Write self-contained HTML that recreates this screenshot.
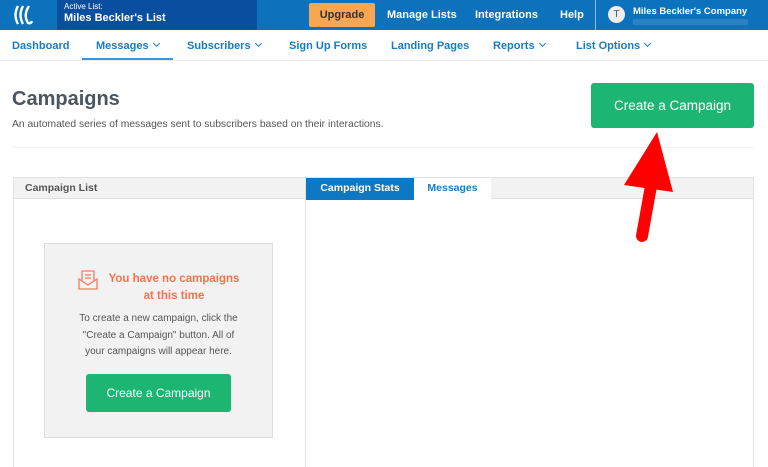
<!DOCTYPE html>
<html><head><meta charset="utf-8"><style>
*{margin:0;padding:0;box-sizing:border-box}
body{width:768px;height:467px;overflow:hidden;background:#fff;font-family:"Liberation Sans",sans-serif;position:relative}
.abs{position:absolute}
.top{left:0;top:0;width:768px;height:30px;background:#0b72bb}
.al{left:57px;top:0;width:200px;height:30px;background:#0a4f9f;color:#fff}
.nav a{position:absolute;top:40px;font-size:11px;font-weight:bold;color:#1a7bc0;white-space:nowrap}
.chev{display:inline-block;width:5px;height:5px;border-right:1.5px solid #1a7bc0;border-bottom:1.5px solid #1a7bc0;transform:rotate(45deg);margin-left:5px;position:relative;top:-3px}
.tl{color:#fff;font-size:11px;font-weight:bold;top:9px}
.btn{background:#1db572;color:#fff;border-radius:3px;text-align:center}
</style></head><body>
<div class="abs top"></div>
<svg class="abs" style="left:10px;top:3px" width="28" height="24" viewBox="0 0 28 24"><g fill="none" stroke="#fff" stroke-width="2.4"><path d="M8 3 Q3 12 8 21"/><path d="M13 3 Q8 12 13 21"/><path d="M19 3 Q13 12 18 20 Q21 21 22 18"/></g></svg>
<div class="abs al"><div style="position:absolute;left:7px;top:2px;font-size:8px">Active List:</div><div style="position:absolute;left:7px;top:12px;font-size:11px;font-weight:bold">Miles Beckler's List</div></div>
<div class="abs" style="left:309px;top:3px;width:66px;height:24px;background:#f9a653;border-radius:2px;font-size:11px;font-weight:bold;color:#333;text-align:center;line-height:24px">Upgrade</div>
<div class="abs tl" style="left:387px">Manage Lists</div>
<div class="abs tl" style="left:475px">Integrations</div>
<div class="abs tl" style="left:560px">Help</div>
<div class="abs" style="left:595px;top:0;width:1px;height:30px;background:#8fb9dd"></div>
<div class="abs" style="left:608px;top:6px;width:17px;height:17px;border-radius:50%;background:#eee;color:#555;font-size:10px;text-align:center;line-height:17px">T</div>
<div class="abs" style="left:633px;top:6px;color:#fff;font-size:9.5px;font-weight:bold">Miles Beckler's Company</div>
<div class="abs" style="left:633px;top:19px;width:115px;height:6px;background:#2a82c4"></div>
<div class="nav">
<a style="left:12px">Dashboard</a>
<a style="left:96px">Messages<span class="chev"></span></a>
<a style="left:187px">Subscribers<span class="chev"></span></a>
<a style="left:289px">Sign Up Forms</a>
<a style="left:391px">Landing Pages</a>
<a style="left:493px">Reports<span class="chev"></span></a>
<a style="left:576px">List Options<span class="chev"></span></a>
</div>
<div class="abs" style="left:82px;top:58px;width:91px;height:2px;background:#3f94d2"></div>
<div class="abs" style="left:0;top:60px;width:768px;height:1px;background:#e8ecef"></div>
<div class="abs" style="left:12px;top:88px;font-size:20px;font-weight:bold;color:#4a5560">Campaigns</div>
<div class="abs" style="left:12px;top:119px;font-size:10.3px;color:#555;white-space:nowrap">An automated series of messages sent to subscribers based on their interactions.</div>
<div class="abs btn" style="left:591px;top:83px;width:163px;height:45px;line-height:45px;font-size:13.5px">Create a Campaign</div>
<div class="abs" style="left:12px;top:147px;width:742px;height:1px;background:#eef0f2"></div>
<div class="abs" style="left:13px;top:177px;width:741px;height:290px;border:1px solid #e3e3e3;border-bottom:none"></div>
<div class="abs" style="left:14px;top:178px;width:291px;height:21px;background:#f2f2f2;border-bottom:1px solid #e0e0e0;font-size:10.5px;font-weight:bold;color:#555;padding:4px 0 0 11px">Campaign List</div>
<div class="abs" style="left:305px;top:178px;width:448px;height:21px;background:#f2f2f2;border-bottom:1px solid #e0e0e0"></div>
<div class="abs" style="left:305px;top:177px;width:1px;height:290px;background:#e0e0e0"></div>
<div class="abs" style="left:306px;top:178px;width:108px;height:22px;background:#0f78c2;color:#fff;font-size:10.5px;font-weight:bold;text-align:center;line-height:21px">Campaign Stats</div>
<div class="abs" style="left:414px;top:178px;width:77px;height:21px;background:#fff;color:#1a7bc0;font-size:10.5px;font-weight:bold;text-align:center;line-height:21px">Messages</div>
<div class="abs" style="left:44px;top:243px;width:229px;height:195px;background:#f2f2f2;border:1px solid #dcdcdc"></div>
<svg class="abs" style="left:77px;top:269px" width="22" height="22" viewBox="0 0 22 22"><g fill="none" stroke="#f57d5e" stroke-width="1.3"><path d="M2 10 L2 20 L20 20 L20 10 L11 16 Z"/><path d="M5 12 L5 2 L17 2 L17 12"/><path d="M8 6h6M8 9h6"/></g></svg>
<div class="abs" style="left:104px;top:271px;font-size:11.5px;font-weight:bold;color:#f5724f;line-height:17px;text-align:center;width:140px;white-space:nowrap">You have no campaigns<br>at this time</div>
<div class="abs" style="left:44px;top:311px;width:229px;font-size:10px;color:#555;text-align:center;line-height:16.5px;white-space:nowrap">To create a new campaign, click the<br>"Create a Campaign" button. All of<br>your campaigns will appear here.</div>
<div class="abs btn" style="left:86px;top:374px;width:145px;height:38px;line-height:38px;font-size:12px">Create a Campaign</div>
<svg class="abs" style="left:0;top:0" width="768" height="467"><path d="M657 132 L624 185 L673 192 Z" fill="#f00"/><path d="M651 186 L642 236" stroke="#f00" stroke-width="12" stroke-linecap="round"/></svg>
</body></html>
